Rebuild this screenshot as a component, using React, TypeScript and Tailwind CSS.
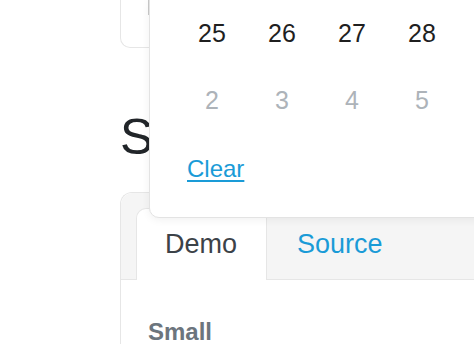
const DAY_ROWS = [
  [
    { d: 25, muted: false },
    { d: 26, muted: false },
    { d: 27, muted: false },
    { d: 28, muted: false },
  ],
  [2, 3, 4, 5].map((d) => ({ d, muted: true })),
];

function DatePopup() {
  return (
    <div className="absolute left-[149px] top-[-1px] w-[340px] h-[219px] bg-white border border-[#e3e3e3] rounded-bl-[10px] shadow-[0_2px_8px_rgba(0,0,0,0.06)]">
      <div className="pl-[27px]">
        {DAY_ROWS.map((row, i) => (
          <div key={i} className="flex">
            {row.map((cell) => (
              <div
                key={cell.d}
                className={`w-[70px] h-[67px] shrink-0 flex items-center justify-center text-[25px] leading-none ${
                  cell.muted ? "text-[#adb3b9]" : "text-[#1f1f1f]"
                }`}
              >
                {cell.d}
              </div>
            ))}
          </div>
        ))}
      </div>
      {/* footer */}
      <div className="pl-[37px] mt-[23px]">
        <a href="#" className="text-[24px] leading-none text-[#1a9bd7] underline underline-offset-[3px] decoration-[1.5px]">
          Clear
        </a>
      </div>
    </div>
  );
}

export default function App() {
  return (
    <div
      className="relative w-[474px] h-[355px] overflow-hidden bg-white pl-[120px]"
      style={{ fontFamily: '"Liberation Sans", Arial, sans-serif' }}
    >
      {/* Card above (mostly scrolled off) */}
      <div className="h-[48px] border-l border-b border-[#e6e6e6] rounded-bl-[10px] pl-[27px]">
        <div className="h-[15px] border-l border-[#c9c9c9]" />
      </div>

      <h2 className="mt-[64px] text-[50px] leading-none text-[#212529]">S</h2>

      {/* Tabs card */}
      <div className="mt-[30px] border-l border-t border-[#e6e6e6] rounded-tl-[12px]">
        <div className="flex bg-[#f5f5f5] pt-[15px] pl-[15px] border-b border-[#e6e6e6] rounded-tl-[12px]">
          <div className="-mb-px bg-white border-l border-t border-r border-[#e6e6e6] rounded-tl-[10px] pl-[28px] pr-[29px] pt-[22px] pb-[22px] text-[27px] leading-none text-[#3c4248]">
            Demo
          </div>
          <div className="pl-[30px] pt-[23px] text-[27px] leading-none text-[#1a9bd7]">Source</div>
        </div>
        <div className="pl-[27px] pt-[40px]">
          <div className="text-[24px] leading-none font-semibold text-[#6c757d]">Small</div>
        </div>
      </div>

      <DatePopup />
    </div>
  );
}
